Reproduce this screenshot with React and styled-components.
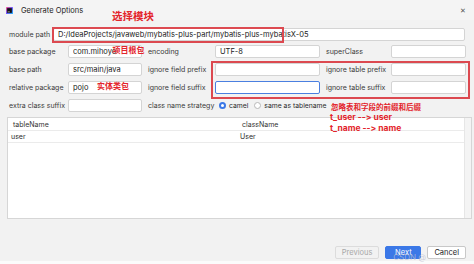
import React from "react";
import styled, { createGlobalStyle } from "styled-components";

const GlobalStyle = createGlobalStyle`
  html, body {
    margin: 0;
    padding: 0;
    background: #f2f2f2;
  }
  body {
    font-family: Inter, "Noto Sans", "Noto Sans CJK SC", sans-serif;
    font-size: 7px;
    color: #2b2b2b;
    font-feature-settings: "calt" 0, "liga" 0;
  }
`;

const App = () => {
  return (
    <>
      <GlobalStyle />
      <Window>
        <TitleBar>
          <AppIcon viewBox="0 0 8 8">
            <defs>
              <linearGradient id="ij" x1="0" y1="0" x2="1" y2="1">
                <stop offset="0" stopColor="#fc4a80" />
                <stop offset="0.5" stopColor="#6b57ff" />
                <stop offset="1" stopColor="#17b6f5" />
              </linearGradient>
            </defs>
            <rect x="0" y="0" width="8" height="8" rx="1" fill="url(#ij)" />
            <rect x="1.3" y="1.3" width="5.4" height="5.4" fill="#111" />
            <rect x="2" y="5.3" width="2.4" height="0.6" fill="#fff" />
          </AppIcon>
          <Title>Generate Options</Title>
          <Close>✕</Close>
        </TitleBar>

        <Form>
          <ModuleRow>
            <Label>module path</Label>
            <Input defaultValue="D:/IdeaProjects/javaweb/mybatis-plus-part/mybatis-plus-mybatisX-05" />
          </ModuleRow>
          <Grid>
            <Label>base package</Label>
            <Input defaultValue="com.mihoyo" />
            <Label $pad>encoding</Label>
            <Input defaultValue="UTF-8" />
            <Label $pad>superClass</Label>
            <Input />

            <Label>base path</Label>
            <Input defaultValue="src/main/java" />
            <Label $pad>ignore field prefix</Label>
            <Input />
            <Label $pad>ignore table prefix</Label>
            <Input />

            <Label>relative package</Label>
            <Input defaultValue="pojo" />
            <Label $pad>ignore field suffix</Label>
            <Input $focused />
            <Label $pad>ignore table suffix</Label>
            <Input />

            <Label>extra class suffix</Label>
            <Input />
            <Label $pad>class name strategy</Label>
            <RadioGroup>
              <Radio $checked />
              <span>camel</span>
              <Radio />
              <span>same as tablename</span>
            </RadioGroup>
          </Grid>
        </Form>

        <TablePane>
          <TableBody>
            <HeaderRow>
              <Cell $head>tableName</Cell>
              <Cell $head>className</Cell>
            </HeaderRow>
            <DataRow>
              <Cell>user</Cell>
              <Cell>User</Cell>
            </DataRow>
          </TableBody>
          <ScrollTrack />
        </TablePane>

        <Footer>
          <Button disabled>Previous</Button>
          <Button $primary>Next</Button>
          <Button>Cancel</Button>
        </Footer>
        <BottomEdge />

        {/* red annotations drawn over the dialog */}
        <Note $x={112} $y={11} $size={10.5}>选择模块</Note>
        <Note $x={112.5} $y={46} $size={8}>项目根包</Note>
        <Note $x={97} $y={82} $size={8}>实体类包</Note>
        <Note $x={331} $y={102.5} $size={7.5}>忽略表和字段的前缀和后缀</Note>
        <Note $x={330} $y={112} $size={8.5}>t_user --&gt; user</Note>
        <Note $x={330} $y={123} $size={8.5}>t_name --&gt; name</Note>
        <RedBox $x={52} $y={27} $w={232} $h={16} />
        <RedBox $x={211} $y={61} $w={259} $h={38} />
        <Watermark>CSDN @</Watermark>
      </Window>
    </>
  );
};

export default App;

const Window = styled.div`
  position: relative;
  width: 474px;
  height: 264px;
  display: flex;
  flex-direction: column;
  background: #f2f2f2;
  overflow: hidden;
`;

const TitleBar = styled.div`
  height: 20px;
  flex-shrink: 0;
  display: flex;
  align-items: center;
  padding: 0 6px;
  box-sizing: border-box;
  background: #f4f4f4;
`;

const AppIcon = styled.svg`
  width: 7px;
  height: 7px;
  margin-right: 8px;
`;

const Title = styled.span`
  flex: 1;
  font-size: 7.5px;
  color: #222;
`;

const Close = styled.span`
  font-size: 7px;
  color: #555;
  margin-right: 2px;
`;

const Form = styled.div`
  padding: 6.5px 0 0 9px;
`;

const ModuleRow = styled.div`
  height: 16px;
  display: grid;
  grid-template-columns: 44px 412px;
  align-items: center;
`;

const Grid = styled.div`
  display: grid;
  grid-template-columns: 59px 74px 73px 105px 71px 75px;
  grid-auto-rows: 18px;
  align-items: center;
`;

const Label = styled.span`
  padding-left: ${(p) => (p.$pad ? "6px" : "0")};
  white-space: nowrap;
  color: #3a3a3a;
`;

const Input = styled.input`
  height: 13px;
  box-sizing: border-box;
  width: 100%;
  margin: 0;
  padding: 0 4px;
  font-family: inherit;
  font-size: 7.5px;
  color: #222;
  background: #fff;
  border: ${(p) => (p.$focused ? "1.5px solid #4a7fe0" : "1px solid #d4d4d4")};
  border-radius: 2px;
  outline: none;
`;

const RadioGroup = styled.div`
  grid-column: span 3;
  display: flex;
  align-items: center;
  gap: 3px;
  padding-left: 4px;
  font-size: 6.8px;
`;

const Radio = styled.span`
  width: 7px;
  height: 7px;
  box-sizing: border-box;
  border-radius: 50%;
  background: #fff;
  border: ${(p) => (p.$checked ? "2.3px solid #3b78e7" : "1px solid #b8b8b8")};
  margin-left: ${(p) => (p.$checked ? "0" : "3px")};
`;

const Note = styled.span`
  position: absolute;
  left: ${(p) => p.$x}px;
  top: ${(p) => p.$y}px;
  font-size: ${(p) => p.$size}px;
  font-weight: 700;
  color: #e3242b;
  white-space: nowrap;
  line-height: 1.2;
  font-family: Inter, "Noto Sans CJK SC", sans-serif;
`;

const RedBox = styled.div`
  position: absolute;
  left: ${(p) => p.$x}px;
  top: ${(p) => p.$y}px;
  width: ${(p) => p.$w}px;
  height: ${(p) => p.$h}px;
  border: 2px solid #dc4950;
  box-sizing: border-box;
  pointer-events: none;
`;

const TablePane = styled.div`
  margin: 2.5px 2px 0 7px;
  height: 102px;
  flex-shrink: 0;
  display: flex;
  border: 1px solid #d6d6d6;
  box-sizing: border-box;
  background: #fff;
`;

const TableBody = styled.div`
  flex: 1;
`;

const ScrollTrack = styled.div`
  width: 6px;
  background: #f4f4f4;
  border-left: 1px solid #e6e6e6;
`;

const HeaderRow = styled.div`
  display: grid;
  grid-template-columns: 229px 1fr;
  height: 12px;
  align-items: center;
  border-bottom: 1px solid #ebebeb;
`;

const DataRow = styled(HeaderRow)`
  height: 11px;
`;

const Cell = styled.span`
  padding-left: ${(p) => (p.$head ? "5px" : "3px")};
  color: ${(p) => (p.$head ? "#333" : "#2b2b2b")};
`;

const Footer = styled.div`
  flex: 1;
  display: flex;
  justify-content: flex-end;
  align-items: flex-end;
  gap: 6px;
  padding: 0 8px 2px 0;
`;

const Button = styled.button`
  height: 13px;
  min-width: 36px;
  padding: 0 6px;
  box-sizing: border-box;
  font-family: inherit;
  font-size: 7.5px;
  border-radius: 2px;
  border: 1px solid ${(p) => (p.$primary ? "#3b78e7" : "#c8c8c8")};
  background: ${(p) => (p.$primary ? "#3b78e7" : "#fff")};
  color: ${(p) => (p.$primary ? "#fff" : "#222")};

  &:disabled {
    background: #f2f2f2;
    border-color: #dcdcdc;
    color: #a8a8a8;
    min-width: 42px;
  }
`;

const Watermark = styled.span`
  position: absolute;
  right: 48px;
  bottom: 2px;
  font-size: 8px;
  color: rgba(190, 195, 210, 0.75);
`;

const BottomEdge = styled.div`
  height: 3px;
  flex-shrink: 0;
  background: #fbfbfb;
`;
